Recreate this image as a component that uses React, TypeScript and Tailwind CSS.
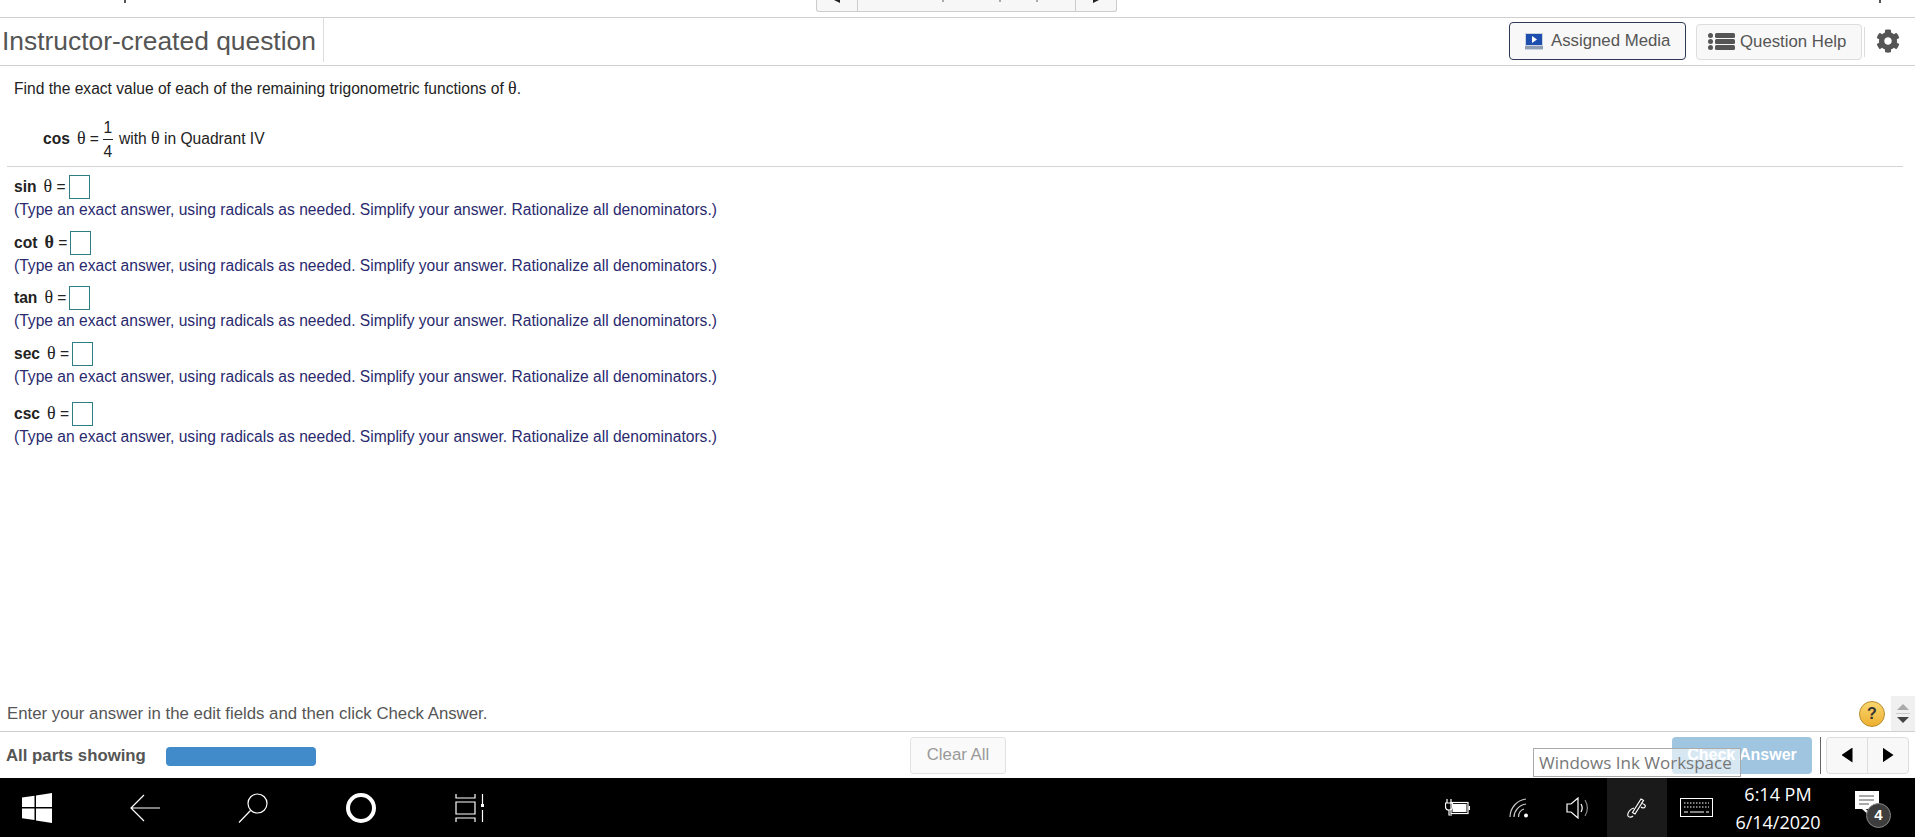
import { FaCog } from 'react-icons/fa';

const sans = "font-['Liberation_Sans',Arial,sans-serif]";
const hint = '(Type an exact answer, using radicals as needed. Simplify your answer. Rationalize all denominators.)';

interface Row {
  name: string;
  gap: string;
  boldTheta?: boolean;
}

const rows: Row[] = [
  { name: 'sin', gap: 'mt-[8px]' },
  { name: 'cot', gap: 'mt-[10px]', boldTheta: true },
  { name: 'tan', gap: 'mt-[9px]' },
  { name: 'sec', gap: 'mt-[10px]' },
  { name: 'csc', gap: 'mt-[14px]' },
];

function Theta({ bold }: { bold?: boolean }) {
  return <span className={`text-[18px] leading-[18px] font-['Liberation_Serif',serif] ${bold ? 'font-bold' : ''}`}>θ</span>;
}

function MediaIcon() {
  return (
    <svg width="18" height="17" viewBox="0 0 18 17">
      <rect x="0" y="0" width="18" height="17" fill="#c9d3e2" />
      <rect x="1" y="1" width="16" height="11" fill="#1f4fae" />
      <path d="M7 3l5 3.500-5 3.500z" fill="#fff" />
      <rect x="0" y="13" width="18" height="3" fill="#8f9db3" />
    </svg>
  );
}

function ListIcon() {
  return (
    <svg width="27" height="17" viewBox="0 0 27 17" fill="#555">
      <circle cx="2.5" cy="2.5" r="2.5" />
      <circle cx="2.5" cy="8.5" r="2.5" />
      <circle cx="2.5" cy="14.5" r="2.5" />
      <rect x="7" y="0" width="20" height="5" rx="1.5" />
      <rect x="7" y="6" width="20" height="5" rx="1.5" />
      <rect x="7" y="12" width="20" height="5" rx="1.5" />
    </svg>
  );
}

function TaskbarIcons() {
  return (
    <div className="flex items-center">
      <svg className="ml-[22px]" width="30" height="30" viewBox="0 0 30 30" fill="#fff">
        <path d="M0 4.500L12.500 2.700V14H0zM14 2.500L30 0V14H14zM0 15.500H12.500V27L0 25.300zM14 15.500H30V30L14 27.500z" />
      </svg>
      <svg className="ml-[78px]" width="30" height="28" viewBox="0 0 30 28" fill="none" stroke="#fff" strokeWidth="1.2">
        <path d="M14 1L1 14l13 13M1 14h29" />
      </svg>
      <svg className="ml-[78px]" width="30" height="30" viewBox="0 0 30 30" fill="none" stroke="#fff" strokeWidth="1.2">
        <circle cx="19.5" cy="10.5" r="9.5" />
        <path d="M12.500 17.500L1 29.500" />
      </svg>
      <div className="ml-[78px] w-[30px] h-[30px] rounded-full border-[4px] border-white" />
      <svg className="ml-[79px]" width="29" height="28" viewBox="0 0 29 28" fill="none" stroke="#fff" strokeWidth="1.2">
        <path d="M1 0v4h19V0M1 8h19v12H1zM1 28v-4h19v4M27.500 0v10M27.500 16v12" />
        <rect x="26" y="10" width="3" height="3" fill="#fff" stroke="none" />
      </svg>
    </div>
  );
}

function TrayIcons() {
  return (
    <div className="flex items-center h-full pr-[35px]">
      <svg width="25" height="20" viewBox="0 0 25 20" fill="none" stroke="#fff" strokeWidth="1.2">
        <path d="M2 1v4M6 1v4M0.500 5h7v3.500a3.500 3.500 0 0 1-7 0zM4 12v5h3" />
        <rect x="6" y="4.500" width="17" height="11" />
        <rect x="7.500" y="6" width="14" height="8" fill="#fff" stroke="none" />
        <rect x="23.500" y="8" width="1.500" height="4" fill="#fff" stroke="none" />
      </svg>
      <svg className="ml-[39px]" width="20" height="20" viewBox="0 0 20 20" fill="none" stroke="#ccc" strokeWidth="1.2">
        <path d="M1 19C1 10 8 2 17 1M5 19C5 13 10 7 17 6M9.500 19C9.500 15 12 12 15 11" />
        <circle cx="17" cy="17.500" r="2" fill="#fff" stroke="none" />
      </svg>
      <svg className="ml-[37px]" width="23" height="22" viewBox="0 0 23 22" fill="none" stroke="#fff" strokeWidth="1.2">
        <path d="M1 7h4l7-6v20l-7-6H1z" />
        <path d="M15 7c1.500 2.500 1.500 5.500 0 8" />
        <path d="M19 3c3 5 3 11 0 16" stroke="#888" />
      </svg>
      <div className="ml-[18px] w-[60px] h-full bg-[#1a1a1a] flex items-center justify-center">
        <svg width="20" height="20" viewBox="0 0 20 20" fill="none" stroke="#fff" strokeWidth="1.2">
          <path d="M14 1l2.500 1.500L8 16l-2.500-1.500zM14 5c3 1 5 2 4 4-1 1.500-3 1-4 0M7 10C3 11 0 15 1 18c1 1.500 3.500 1.500 5 0" />
        </svg>
      </div>
      <svg className="ml-[13px]" width="33" height="19" viewBox="0 0 33 19" fill="none" stroke="#fff">
        <rect x="0.500" y="0.500" width="32" height="18" />
        <path d="M4 5h25M4 9h25" strokeDasharray="1.500 1.500" />
        <path d="M4 14h4M10 14h14M26 14h3" />
      </svg>
      <div className="ml-[20px] w-[90px] text-center text-white text-[18px] font-['Open_Sans',sans-serif]">
        <div className="leading-[28px]">6:14 PM</div>
        <div className="leading-[28px]">6/14/2020</div>
      </div>
      <div className="relative ml-[32px] w-[25px] h-[25px] -mt-[8px]">
        <svg width="25" height="27" viewBox="0 0 25 27" fill="#fff">
          <path d="M0 0h24v18H11l5 8-9-8H0z" />
          <path d="M4 5h15M4 9h15M4 13h10" stroke="#555" strokeWidth="1" />
        </svg>
        <div className="absolute left-[11px] top-[12px] w-[25px] h-[25px] rounded-full bg-[#3d3d3d] border border-[#888] flex items-center justify-center text-white text-[15px] font-bold">
          4
        </div>
      </div>
    </div>
  );
}

export default function App() {
  return (
    <div className={`relative w-[1915px] h-[837px] overflow-hidden flex flex-col bg-white ${sans}`}>
      {/* top strip, mostly scrolled out of view */}
      <div className="h-[18px] shrink-0 border-b border-[#cfcfcf] flex items-start">
        <div className="w-[816px] shrink-0 pl-[124px]">
          <div className="w-[2px] h-[3px] bg-[#555]" />
        </div>
        <div className="w-[301px] h-[12px] shrink-0 border border-t-0 border-[#ccc] rounded-b-[3px] bg-[#f7f7f7] flex">
          <div className="w-[41px] border-r border-[#ccc] flex justify-center">
            <div className="w-[6px] h-[3px] bg-[#222] [clip-path:polygon(0_0,100%_0,100%_100%)]" />
          </div>
          <div className="flex-1 flex">
            <div className="ml-[84px] w-[2px] h-[2px] bg-[#aaa]" />
            <div className="ml-[55px] w-[2px] h-[2px] bg-[#aaa]" />
            <div className="ml-[35px] w-[2px] h-[2px] bg-[#aaa]" />
          </div>
          <div className="w-[41px] border-l border-[#ccc] flex justify-center">
            <div className="w-[6px] h-[3px] bg-[#222] [clip-path:polygon(0_0,100%_0,0_100%)]" />
          </div>
        </div>
        <div className="flex-1 pl-[762px]">
          <div className="w-[2px] h-[3px] bg-[#555]" />
        </div>
      </div>

      {/* title bar */}
      <div className="h-[48px] shrink-0 border-b border-[#cfcfcf] flex items-center">
        <div className="h-[44px] -mt-[3px] w-[324px] border-r border-[#ddd] pl-[2px] pt-[4px] flex items-center text-[26.4px] text-[#555]">
          Instructor-created question
        </div>
        <div className="ml-auto flex items-center">
          <div className="w-[177px] h-[38px] rounded-[4px] border border-[#2e3a55] bg-[#f8f8f8] flex items-center pl-[15px] gap-[8px] text-[16.8px] text-[#555] -mt-[1px]">
            <MediaIcon />
            <span>Assigned Media</span>
          </div>
          <div className="ml-[10px] w-[166px] h-[36px] rounded-[4px] border border-[#ddd] bg-[#f8f8f8] flex items-center pl-[11px] gap-[5px] text-[16.8px] text-[#555]">
            <ListIcon />
            <span>Question Help</span>
          </div>
          <div className="ml-[2px] w-px h-[30px] bg-[#ddd]" />
          <div className="w-[50px] flex justify-center pr-[5px] -mt-[2px]">
            <FaCog className="text-[#555] text-[24px]" />
          </div>
        </div>
      </div>

      {/* question */}
      <div className="flex-1 pl-[7px] pr-[12px]">
        <div className="h-[101px] border-b border-[#d4d4d4] text-[15.6px] text-[#222] px-[7px]">
          <div className="pt-[13px] leading-[18px]">
            Find the exact value of each of the remaining trigonometric functions of <Theta />.
          </div>
          <div className="mt-[22px] ml-[29px] flex items-center h-[38px]">
            <b>cos</b>
            <span className="ml-[7px]">
              <Theta /> =
            </span>
            <div className="ml-[4px] mr-[6px] flex flex-col items-center text-center leading-[23px] w-[10px]">
              <span>1</span>
              <span className="block w-[10px] h-px bg-[#222]" />
              <span>4</span>
            </div>
            <span>
              with <Theta /> in Quadrant IV
            </span>
          </div>
        </div>
        <div className="px-[7px] text-[15.6px] text-[#222]">
          {rows.map((row) => (
            <div key={row.name} className={row.gap}>
              <div className="flex items-center h-[24px]">
                <b>{row.name}</b>
                <span className="ml-[7px]">
                  <Theta bold={row.boldTheta} /> =
                </span>
                <div className="ml-[3px] w-[21px] h-[24px] border border-[#2f7d85] bg-white" />
              </div>
              <div className="leading-[22px] text-[#2a2a6e]">{hint}</div>
            </div>
          ))}
        </div>
      </div>

      {/* instructions */}
      <div className="h-[36px] shrink-0 border-b border-[#cfcfcf] flex items-center text-[16.8px] text-[#555] pl-[7px]">
        <span>Enter your answer in the edit fields and then click Check Answer.</span>
        <div className="ml-auto w-[26px] h-[26px] mr-[6px] rounded-full bg-gradient-to-b from-[#f9d66e] to-[#eeb02c] border border-[#b98a2a] flex items-center justify-center font-bold text-[#333] text-[16px]">
          ?
        </div>
        <div className="w-[24px] h-[35px] bg-[#f0f0f0] flex flex-col items-center justify-center gap-[3px] self-end">
          <div className="w-[12px] h-[6px] bg-[#aaa] [clip-path:polygon(50%_0,100%_100%,0_100%)]" />
          <div className="w-[14px] h-px bg-[#ccc]" />
          <div className="w-[12px] h-[6px] bg-[#444] [clip-path:polygon(0_0,100%_0,50%_100%)]" />
        </div>
      </div>

      {/* footer */}
      <div className="h-[46px] shrink-0 flex items-center pl-[6px] relative">
        <b className="text-[16.8px] text-[#555] w-[160px] mt-[2px]">All parts showing</b>
        <div className="w-[150px] h-[19px] rounded-[4px] bg-[#428bca] mt-[2px]" />
        <div className="ml-[594px] w-[96px] h-[37px] rounded-[3px] border border-[#e2e2e2] bg-[#fafafa] flex items-center justify-center text-[16.8px] text-[#999]">
          Clear All
        </div>
        <div className="ml-[666px] w-[140px] h-[37px] rounded-[4px] bg-[#9fc5e0] flex items-center justify-center text-white text-[16px] font-bold">
          Check Answer
        </div>
        <div className="ml-[8px] w-px h-[37px] bg-[#666]" />
        <div className="ml-[5px] w-[83px] h-[37px] rounded-[4px] border border-[#ddd] bg-[#f8f8f8] flex">
          <div className="flex-1 border-r border-[#ddd] flex items-center justify-center">
            <div className="w-[11px] h-[15px] bg-black [clip-path:polygon(100%_0,100%_100%,0_50%)]" />
          </div>
          <div className="flex-1 flex items-center justify-center">
            <div className="w-[11px] h-[15px] bg-black [clip-path:polygon(0_0,100%_50%,0_100%)]" />
          </div>
        </div>
        {/* ink workspace tooltip */}
        <div className="absolute left-[1533px] top-[16px] w-[208px] h-[29px] border border-[#aaa] bg-white/60 text-[17px] text-[#777] whitespace-nowrap flex items-center pl-[5px] font-['Open_Sans',sans-serif]">
          Windows Ink Workspace
        </div>
      </div>

      {/* taskbar */}
      <div className="h-[59px] shrink-0 bg-black flex items-center justify-between">
        <TaskbarIcons />
        <TrayIcons />
      </div>
    </div>
  );
}
